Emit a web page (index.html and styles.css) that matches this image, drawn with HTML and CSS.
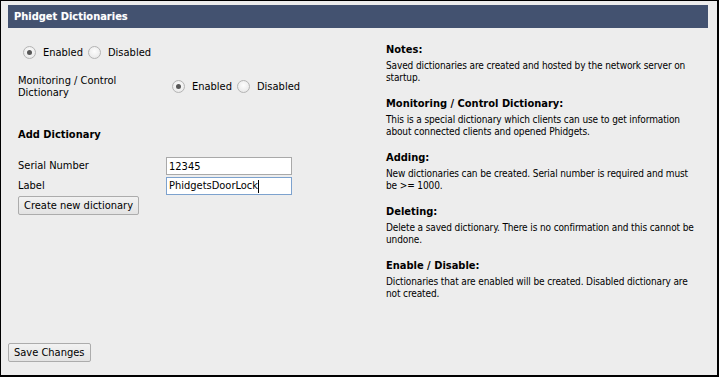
FILE: index.html
```html
<!DOCTYPE html>
<html>
<head>
<meta charset="utf-8">
<link rel="stylesheet" href="styles.css">
</head>
<body>
<div class="frame">
  <div class="titlebar">Phidget Dictionaries</div>
  <div class="columns">
    <div class="left">
      <div class="row first">
        <label class="opt"><input type="radio" name="d1" checked><span>Enabled</span></label>
        <label class="opt"><input type="radio" name="d1"><span>Disabled</span></label>
      </div>
      <div class="row mon">
        <div class="lbl">Monitoring / Control Dictionary</div>
        <div class="opts">
          <label class="opt"><input type="radio" name="d2" checked><span>Enabled</span></label>
          <label class="opt"><input type="radio" name="d2"><span>Disabled</span></label>
        </div>
      </div>
      <h3 class="sub">Add Dictionary</h3>
      <div class="field">
        <div class="lbl">Serial Number</div>
        <input class="txt" type="text" value="12345">
      </div>
      <div class="field">
        <div class="lbl">Label</div>
        <div class="txt focus">PhidgetsDoorLock<span class="caret"></span></div>
      </div>
      <button class="btn">Create new dictionary</button>
    </div>
    <div class="right">
      <h4>Notes:</h4>
      <p>Saved dictionaries are created and hosted by the network server on startup.</p>
      <h4>Monitoring / Control Dictionary:</h4>
      <p>This is a special dictionary which clients can use to get information about connected clients and opened Phidgets.</p>
      <h4>Adding:</h4>
      <p>New dictionaries can be created. Serial number is required and must be &gt;= 1000.</p>
      <h4>Deleting:</h4>
      <p>Delete a saved dictionary. There is no confirmation and this cannot be undone.</p>
      <h4>Enable / Disable:</h4>
      <p>Dictionaries that are enabled will be created. Disabled dictionary are not created.</p>
    </div>
  </div>
  <div class="footer">
    <button class="btn">Save Changes</button>
  </div>
</div>
</body>
</html>
```
FILE: styles.css
```css
html, body {
  margin: 0;
  padding: 0;
  background: #ededed;
}
body {
  font-family: "DejaVu Sans", sans-serif;
  font-stretch: condensed;
  font-size: 11px;
  color: #000;
}
.frame {
  box-sizing: border-box;
  width: 719px;
  height: 377px;
  border-style: solid;
  border-color: #000;
  border-width: 1px 2px 2px 1px;
  background: #ededed;
  display: flex;
  flex-direction: column;
}
.titlebar {
  margin: 4px 9px 0 7px;
  height: 23px;
  background: #435270;
  color: #fff;
  font-weight: bold;
  font-size: 11px;
  line-height: 23px;
  padding-left: 6px;
  text-shadow: 0 0 1px rgba(255,255,255,0.3);
}
.columns {
  display: flex;
  flex: 1;
}
.left {
  width: 368px;
  padding-left: 17px;
}
.right {
  flex: 1;
  padding-top: 15px;
  padding-right: 19px;
}
.row {
  display: flex;
  align-items: center;
}
.row.first {
  padding-left: 5px;
  margin-top: 16px;
  height: 16px;
}
.opt {
  display: inline-flex;
  align-items: center;
  margin-right: 5px;
}
.opt span {
  margin-left: 7px;
}
input[type=radio] {
  appearance: none;
  -webkit-appearance: none;
  margin: 0;
  width: 13px;
  height: 13px;
  border-radius: 50%;
  border: 1px solid #b4b4b4;
  box-sizing: border-box;
  background: radial-gradient(circle at 50% 40%, #fdfdfd 0, #e4e4e4 100%);
  position: relative;
}
input[type=radio]:checked::after {
  content: "";
  position: absolute;
  left: 3px;
  top: 3px;
  width: 5px;
  height: 5px;
  border-radius: 50%;
  background: #575757;
}
.row.mon {
  margin-top: 12px;
  height: 28px;
}
.lbl {
  width: 148px;
  flex: none;
  line-height: 12px;
}
.mon .lbl {
  padding-top: 1px;
}
.mon .opts {
  padding-left: 6px;
  display: flex;
}
.sub {
  font-size: 11px;
  font-weight: bold;
  margin: 28px 0 0 0;
  line-height: 14px;
}
.field {
  display: flex;
  align-items: center;
  height: 20px;
}
.sub + .field {
  margin-top: 14px;
}
.txt {
  box-sizing: border-box;
  width: 126px;
  height: 18px;
  border: 1px solid #a9a9a9;
  background: #fff;
  font: inherit;
  padding: 0 2px;
  margin: 0;
  line-height: 16px;
  outline: none;
}
.txt.focus {
  border-color: #7da2ce;
  display: flex;
  align-items: center;
}
.caret {
  display: inline-block;
  width: 1px;
  height: 13px;
  background: #000;
}
.btn {
  font: inherit;
  color: #000;
  height: 19px;
  padding: 0 5px;
  border: 1px solid #acacac;
  border-radius: 2px;
  background: linear-gradient(#f2f2f2, #e3e3e3);
  margin: 0;
}
.right h4 {
  font-size: 11px;
  font-weight: bold;
  margin: 0 0 3px 0;
  line-height: 14px;
}
.right p {
  font-size: 10px;
  letter-spacing: -0.12px;
  margin: 0 0 13px 0;
  line-height: 12px;
}
.footer {
  padding: 0 0 13px 7px;
}
```
